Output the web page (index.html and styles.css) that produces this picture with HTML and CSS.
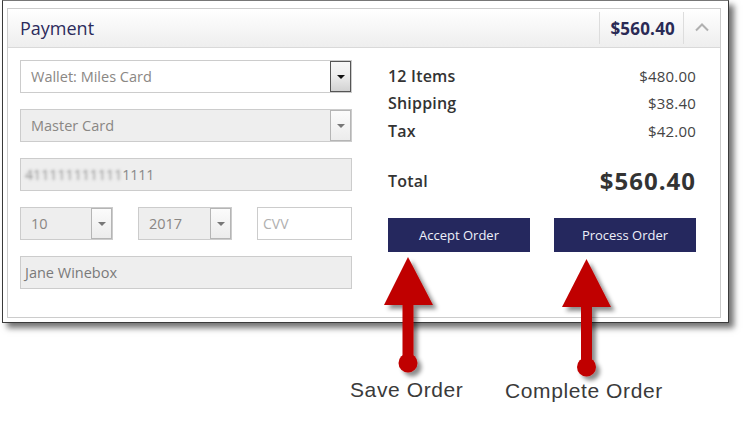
FILE: index.html
```html
<!DOCTYPE html>
<html>
<head>
<meta charset="utf-8">
<title>Payment</title>
<link rel="stylesheet" href="styles.css">
</head>
<body>
<div class="shot">
  <div class="panel">
    <div class="panel-head">
      <div class="title">Payment</div>
      <div class="head-total">$560.40</div>
      <div class="head-toggle">
        <svg width="14" height="9" viewBox="0 0 14 9"><polyline points="1,7.5 7,1.5 13,7.5" fill="none" stroke="#b0b0b0" stroke-width="2"/></svg>
      </div>
    </div>
    <div class="panel-body">
      <div class="form-col">
        <div class="field select">
          <span class="val">Wallet: Miles Card</span>
          <span class="caret-box strong"><i class="tri"></i></span>
        </div>
        <div class="field select disabled">
          <span class="val">Master Card</span>
          <span class="caret-box"><i class="tri"></i></span>
        </div>
        <div class="field disabled card">
          <span class="blur">411111111111</span><span class="val">1111</span>
        </div>
        <div class="row3">
          <div class="field select disabled">
            <span class="val">10</span>
            <span class="caret-box"><i class="tri"></i></span>
          </div>
          <div class="field select disabled">
            <span class="val">2017</span>
            <span class="caret-box"><i class="tri"></i></span>
          </div>
          <div class="field input">
            <span class="ph">CVV</span>
          </div>
        </div>
        <div class="field disabled name">
          <span class="val">Jane Winebox</span>
        </div>
      </div>
      <div class="summary">
        <div class="line"><span class="lbl">12 Items</span><span class="amt">$480.00</span></div>
        <div class="line"><span class="lbl">Shipping</span><span class="amt">$38.40</span></div>
        <div class="line"><span class="lbl">Tax</span><span class="amt">$42.00</span></div>
        <div class="total"><span class="lbl">Total</span><span class="big">$560.40</span></div>
        <div class="actions">
          <div class="btn">Accept Order</div>
          <div class="btn">Process Order</div>
        </div>
      </div>
    </div>
  </div>
</div>

<svg class="arrows" width="745" height="423" viewBox="0 0 745 423">
  <defs>
    <filter id="sh" x="-50%" y="-50%" width="200%" height="200%">
      <feDropShadow dx="4" dy="4" stdDeviation="2" flood-color="#000" flood-opacity="0.45"/>
    </filter>
  </defs>
  <g fill="#c00000" filter="url(#sh)">
    <polygon points="408,257 384,305 433,305"/>
    <rect x="402.5" y="303" width="11" height="60"/>
    <circle cx="408" cy="363" r="9.5"/>
  </g>
  <g fill="#c00000" filter="url(#sh)">
    <polygon points="586.5,259 562,307 611,307"/>
    <rect x="581" y="305" width="11" height="62"/>
    <circle cx="586.5" cy="367" r="9.5"/>
  </g>
</svg>
<div class="note save">Save Order</div>
<div class="note complete">Complete Order</div>
</body>
</html>
```

FILE: styles.css
```css
* { box-sizing: border-box; }

html, body {
  margin: 0;
  padding: 0;
  background: #ffffff;
  width: 745px;
  height: 423px;
  overflow: hidden;
  font-family: "Open Sans", "Noto Sans", sans-serif;
}

body { position: relative; }

.shot {
  margin-left: 2px;
  width: 727px;
  height: 323px;
  border: 1px solid #3a3a3a;
  border-top-color: #777777;
  background: #ffffff;
  box-shadow: 5px 5px 6px rgba(0, 0, 0, 0.55);
  padding-top: 7px;
  padding-left: 4px;
}

.panel {
  width: 714px;
  height: 310px;
  border: 1px solid #cccccc;
  background: #ffffff;
}

.panel-head {
  display: flex;
  align-items: center;
  height: 39px;
  border-bottom: 1px solid #d9d9d9;
  background: linear-gradient(#ffffff, #eeeeee);
}

.title {
  flex: 1;
  padding-left: 12px;
  font-size: 18px;
  color: #2c2b5c;
}

.head-total {
  height: 32px;
  display: flex;
  align-items: center;
  padding: 0 8px 0 10px;
  border-left: 1px solid #dddddd;
  border-right: 1px solid #dddddd;
  font-size: 17px;
  font-weight: 700;
  color: #2a2a55;
  letter-spacing: 0.2px;
}

.head-toggle {
  width: 36px;
  display: flex;
  justify-content: center;
  align-items: center;
  padding-bottom: 2px;
}

.head-toggle svg { display: block; }

.panel-body {
  display: flex;
  gap: 36px;
  padding: 12px 24px 0 12px;
}

.form-col {
  width: 332px;
  display: flex;
  flex-direction: column;
  gap: 16px;
}

.field {
  height: 33px;
  border: 1px solid #cccccc;
  background: #ffffff;
  display: flex;
  align-items: center;
  padding-left: 10px;
  font-size: 14.5px;
  color: #8a8784;
  position: relative;
}

.field.disabled { background: #eeeeee; }

.field .val { flex: 1; white-space: nowrap; }

.field.card, .field.name { padding-left: 4px; }
.field.card { font-size: 14px; }
.field.card .val { flex: none; color: #888888; }
.field.name .val { color: #7a7a7a; }

.blur {
  color: transparent;
  text-shadow: 0 0 3px rgba(120, 120, 120, 0.8);
  letter-spacing: 0.1px;
}

.caret-box {
  width: 21px;
  height: 31px;
  border: 1px solid #b5b5b5;
  background: linear-gradient(#fbfbfb, #ececec);
  display: flex;
  align-items: center;
  justify-content: center;
  flex: none;
}

.caret-box.strong {
  border-color: #555555;
  background: linear-gradient(#f7f7f7 0%, #eeeeee 45%, #d2d2d2 100%);
}

.tri {
  width: 0;
  height: 0;
  border-left: 4px solid transparent;
  border-right: 4px solid transparent;
  border-top: 4px solid #777777;
  margin-top: 1px;
}

.caret-box.strong .tri { border-top-color: #111111; }

.row3 {
  display: grid;
  grid-template-columns: 93px 94px 95px;
  gap: 25px;
}

.field.input .ph { color: #b0b0b0; margin-left: -5px; font-size: 14px; }

.summary {
  width: 308px;
  padding-top: 2px;
  color: #333333;
}

.line {
  display: flex;
  justify-content: space-between;
  align-items: center;
  height: 27.5px;
}

.lbl {
  font-size: 16px;
  font-weight: 600;
  color: #333333;
  letter-spacing: 0.2px;
}

.amt {
  font-size: 15px;
  color: #444444;
  letter-spacing: 0.2px;
}

.total {
  display: flex;
  justify-content: space-between;
  align-items: center;
  height: 36px;
  margin-top: 18px;
}

.big {
  font-size: 24px;
  font-weight: 700;
  color: #333333;
  letter-spacing: 1px;
}

.actions {
  display: flex;
  justify-content: space-between;
  margin-top: 19px;
}

.btn {
  width: 142px;
  height: 34px;
  background: #25285e;
  color: #eef0fa;
  font-size: 13px;
  display: flex;
  align-items: center;
  justify-content: center;
}

.arrows {
  position: absolute;
  left: 0;
  top: 0;
  pointer-events: none;
}

.note {
  position: absolute;
  font-family: "Liberation Sans", Arial, sans-serif;
  font-size: 21px;
  line-height: 21px;
  letter-spacing: 0.6px;
  color: #3a3a3a;
  white-space: nowrap;
}

.note.save { left: 350px; top: 379px; }
.note.complete { left: 505px; top: 380px; }
```
